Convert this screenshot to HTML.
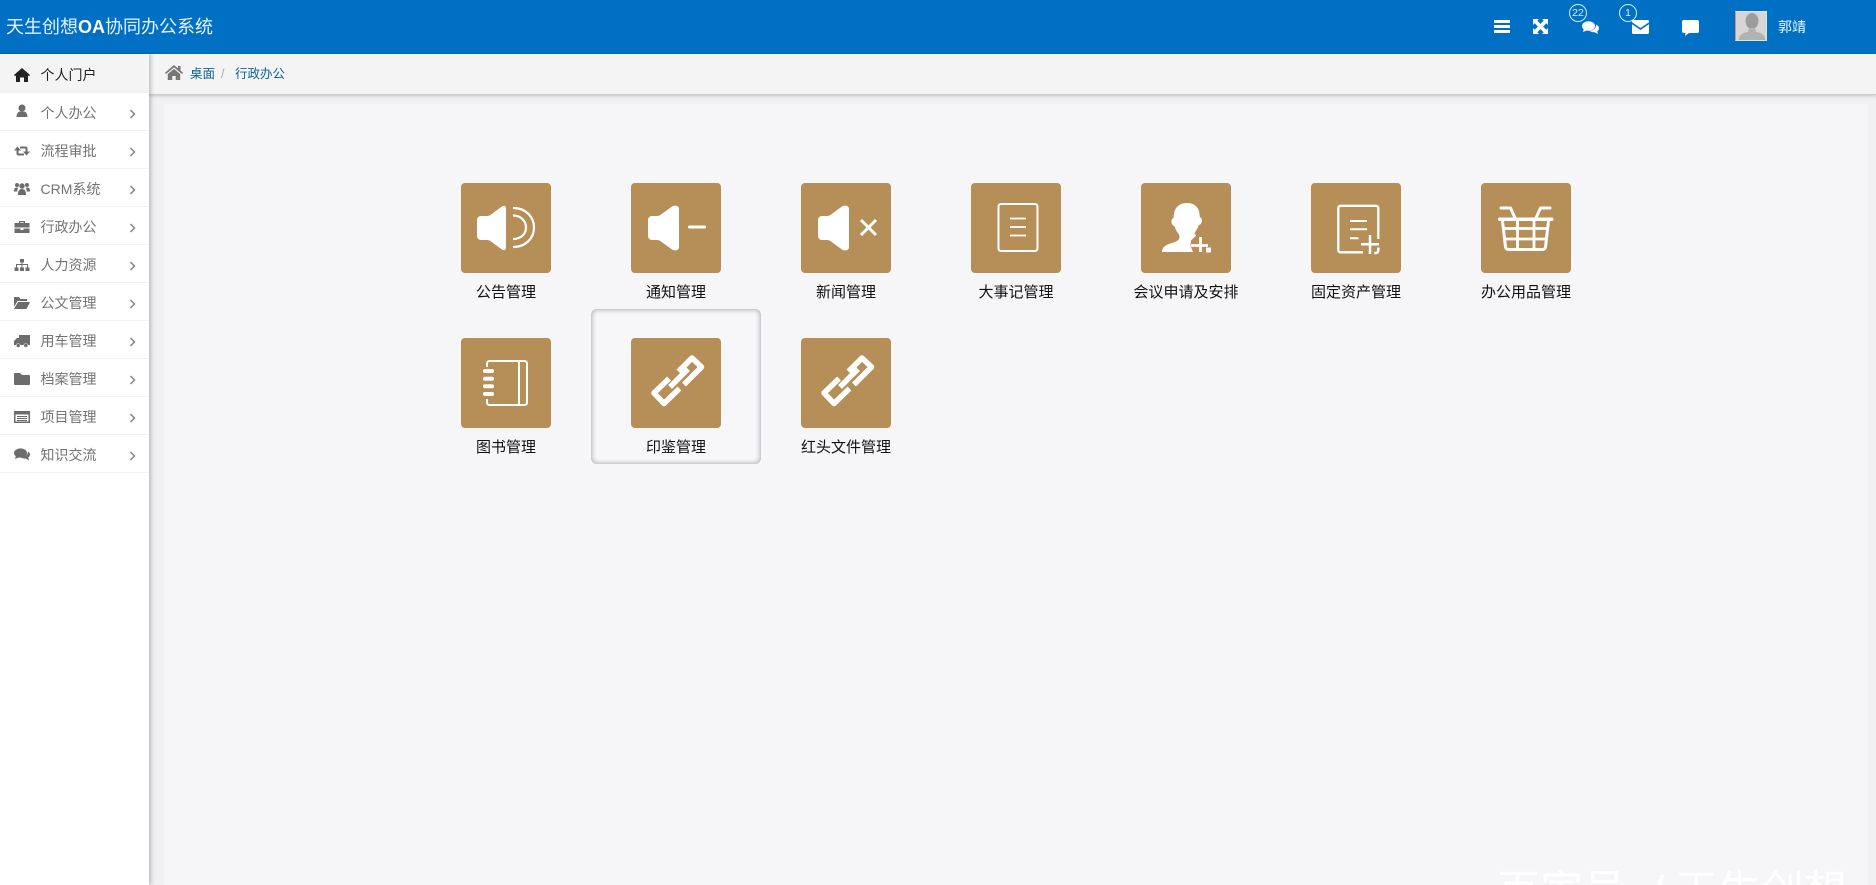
<!DOCTYPE html>
<html lang="zh"><head><meta charset="utf-8"><title>天生创想OA协同办公系统</title>
<style>
*{margin:0;padding:0;box-sizing:border-box}
html{width:1876px;height:885px;overflow:hidden}
body{position:relative;width:1876px;height:885px;overflow:hidden;background:#f0f0f2;font-family:"Liberation Sans","Noto Sans CJK SC",sans-serif}
.abs{position:absolute}
#hd{left:0;top:0;width:1876px;height:54px;background:#0070c5}
#title{left:6px;top:15px;font-size:18px;line-height:24px;color:#e6f3fb;white-space:nowrap}
#title b{font-weight:700;color:#fff}
#side{left:0;top:54px;width:149px;height:831px;background:#fff;box-shadow:2px 0 4px rgba(0,0,0,.22);z-index:3}
.row{position:absolute;left:0;width:149px;height:38px;border-bottom:1px solid #f2f2f2;color:#737373;font-size:14px}
.row span{position:absolute;left:40.500px;top:10px;line-height:20px;white-space:nowrap}
.row svg.i{position:absolute;left:14px;top:12px;width:16px;height:16px;fill:#6c6c6c}
.row svg.c{position:absolute;left:129px;top:16px;width:7px;height:10px;fill:none;stroke:#808080;stroke-width:1.4}
#bc{left:149px;top:54px;width:1727px;height:41px;background:#f4f4f4;border-bottom:1px solid #ccc;box-shadow:0 1px 3px rgba(0,0,0,.18)}
#bc div{position:absolute;top:10px;font-size:12.5px;line-height:20px;color:#0c6396;white-space:nowrap}
#main{left:164px;top:104px;width:1704px;height:781px;background:#f6f6f9}
.t{position:absolute;width:90px;height:90px;background:#b68e58;border-radius:4px}
.t svg{position:absolute;left:0;top:0;width:90px;height:90px}
.l{position:absolute;width:170px;text-align:center;font-size:15px;line-height:20px;color:#111;white-space:nowrap}
#hover{left:591px;top:309px;width:170px;height:155px;border-radius:6px;box-shadow:inset 0 0 5px 1px rgba(0,0,0,.28);background:#f7f7fa}
.badge{position:absolute;width:18px;height:18px;border:1px solid #d5ecfa;border-radius:50%;color:#d5ecfa;font-size:10.5px;line-height:16px;text-align:center}
#av{left:1735px;top:11px;width:32px;height:30px;background:#d2d2d2;border:1px solid #cfeaf9;border-left:1px solid #e08a80;overflow:hidden}
.wm{position:absolute;top:868px;font-size:43px;line-height:48px;color:#fff;white-space:nowrap}
</style></head><body>
<div class="abs" id="hd"></div>
<div class="abs" id="title">天生创想<b>OA</b>协同办公系统</div>

<svg class="abs" style="left:1494px;top:20px" width="16" height="14" fill="#fff"><rect width="16" height="3"/><rect y="5" width="16" height="3"/><rect y="10" width="16" height="3"/></svg>
<svg class="abs" style="left:1533px;top:19px" width="15" height="15" viewBox="0 0 15 15" fill="#fff"><path d="M0 0h6L4.300 1.700 7.500 4.900 10.700 1.700 9 0h6v6l-1.700-1.700L10.100 7.500l3.200 3.200L15 9v6H9l1.700-1.700-3.200-3.200-3.200 3.200L6 15H0V9l1.700 1.700 3.200-3.200-3.200-3.200L0 6z"/></svg>
<div class="badge" style="left:1569px;top:4px">22</div>
<svg class="abs" style="left:1582px;top:21px" width="17" height="13" viewBox="0 0 17 13" fill="#fff"><ellipse cx="6.500" cy="5" rx="6.500" ry="4.800"/><path d="M2 7L1 11 6 9z"/><path d="M14 3.500c2 .8 3 2.200 3 3.700 0 1.300-.8 2.400-1.800 3.100L16 13l-3.300-1.800c-2 .2-4.200-.4-5.200-1.400 3.800 0 6.800-2.600 6.500-6.300z"/></svg>
<div class="badge" style="left:1619px;top:4px">1</div>
<svg class="abs" style="left:1632px;top:20px" width="17" height="14" viewBox="0 0 17 14" fill="#fff"><path d="M1.500 0h14A1.500 1.500 0 0 1 17 1.500v.7L8.500 8 0 2.200v-.7A1.500 1.500 0 0 1 1.500 0z"/><path d="M0 4.200L8.500 10 17 4.200v8.300a1.500 1.500 0 0 1-1.500 1.500h-14A1.500 1.500 0 0 1 0 12.500z"/></svg>
<svg class="abs" style="left:1682px;top:20px" width="17" height="16" viewBox="0 0 17 16" fill="#fff"><path d="M2 0h13a2 2 0 0 1 2 2v9a2 2 0 0 1-2 2H7l-4 3 .6-3H2a2 2 0 0 1-2-2V2a2 2 0 0 1 2-2z"/></svg>
<div class="abs" id="av"><svg width="30" height="28" viewBox="0 0 30 28"><rect width="30" height="28" fill="#d6d6d6"/><ellipse cx="16" cy="9" rx="6.500" ry="8" fill="#9c9c9c"/><path d="M3 28c0-5 3-7 9-8l1-4h6l1 4c6 1 9 3 9 8z" fill="#b2b2b2"/></svg></div>
<div class="abs" style="left:1778px;top:17px;font-size:14px;line-height:20px;color:#eef7fd;white-space:nowrap">郭靖</div>

<div class="abs" id="side">
<div class="row" style="top:0;height:39px;background:#f4f4f4;color:#222"><span style="top:11px">个人门户</span><svg class="i" style="top:13px;left:14px;fill:#222" viewBox="0 0 16 16"><path d="M8 1l8 7-1 1.200-1-.8V15h-4v-4.500H6V15H2V8.400l-1 .8L0 8z"/></svg></div>
<div class="row" style="top:39px"><span>个人办公</span><svg class="i" style="top:11px" viewBox="0 0 16 16"><circle cx="8" cy="4" r="3.500"/><path d="M2.500 13c0-3 1.500-5 3-5.500h5c1.500.5 3 2.500 3 5.500z"/></svg><svg class="c" viewBox="0 0 7 10"><path d="M1.500 1l4 4-4 4"/></svg></div>
<div class="row" style="top:77px"><span>流程审批</span><svg class="i" viewBox="0 0 16 16"><path d="M0 7.500h7L3.500 3.500zM9 8.500h7l-3.500 4z"/><path d="M3.500 7v3.500a1 1 0 0 0 1 1h5.500M12.500 9V5.500a1 1 0 0 0-1-1H6" fill="none" stroke="#6c6c6c" stroke-width="2"/></svg><svg class="c" viewBox="0 0 7 10"><path d="M1.500 1l4 4-4 4"/></svg></div>
<div class="row" style="top:115px"><span>CRM系统</span><svg class="i" viewBox="0 0 16 16"><circle cx="3" cy="4" r="2"/><circle cx="13" cy="4" r="2"/><circle cx="8" cy="5" r="2.700"/><path d="M0 10c0-2.500 1-3.500 3-3.500.5 0 1 .2 1.300.4-.7.7-1 2-1 3.600H0zM16 10c0-2.500-1-3.500-3-3.500-.5 0-1 .2-1.300.4.7.7 1 2 1 3.600H16zM4 14c0-4 1-6 4-6s4 2 4 6z"/></svg><svg class="c" viewBox="0 0 7 10"><path d="M1.500 1l4 4-4 4"/></svg></div>
<div class="row" style="top:153px"><span>行政办公</span><svg class="i" viewBox="0 0 16 16"><path d="M5 2h6v2h4.500v4.500h-15V4H5zm1.300 1.200V4h3.400v-.8zM.5 9.500h6V11h3V9.500h6V14h-15z"/></svg><svg class="c" viewBox="0 0 7 10"><path d="M1.500 1l4 4-4 4"/></svg></div>
<div class="row" style="top:191px"><span>人力资源</span><svg class="i" viewBox="0 0 16 16"><path d="M6 2h4v3.500H8.500V7H14v3.500h1.500V14h-4v-3.500H13V8H8.500v2.500H10V14H6v-3.500h1.500V8H3v2.500h1.500V14h-4v-3.500H2V7h5.500V5.500H6z"/></svg><svg class="c" viewBox="0 0 7 10"><path d="M1.500 1l4 4-4 4"/></svg></div>
<div class="row" style="top:229px"><span>公文管理</span><svg class="i" viewBox="0 0 16 16"><path d="M0 2h5l1.500 2H13v2H3.500L0 12zM4 7h12l-3.500 7H0z"/></svg><svg class="c" viewBox="0 0 7 10"><path d="M1.500 1l4 4-4 4"/></svg></div>
<div class="row" style="top:267px"><span>用车管理</span><svg class="i" viewBox="0 0 16 16"><path d="M5 2h11v10h-2a2.300 2.300 0 0 0-4.400 0H6.400A2.300 2.300 0 0 0 2 12H0V8l3-3h2z"/><circle cx="4.200" cy="12.500" r="1.700"/><circle cx="11.800" cy="12.500" r="1.700"/></svg><svg class="c" viewBox="0 0 7 10"><path d="M1.500 1l4 4-4 4"/></svg></div>
<div class="row" style="top:305px"><span>档案管理</span><svg class="i" viewBox="0 0 16 16"><path d="M1 2h5l2 2h7a1 1 0 0 1 1 1v8a1 1 0 0 1-1 1H1a1 1 0 0 1-1-1V3a1 1 0 0 1 1-1z"/></svg><svg class="c" viewBox="0 0 7 10"><path d="M1.500 1l4 4-4 4"/></svg></div>
<div class="row" style="top:343px"><span>项目管理</span><svg class="i" viewBox="0 0 16 16"><path fill-rule="evenodd" d="M0 2h16v12H0zM1.500 5.500v7h13v-7zM3 7h10v1H3zm0 2h10v1H3zm0 2h10v1H3z"/></svg><svg class="c" viewBox="0 0 7 10"><path d="M1.500 1l4 4-4 4"/></svg></div>
<div class="row" style="top:381px"><span>知识交流</span><svg class="i" viewBox="0 0 16 16"><ellipse cx="6.500" cy="6" rx="6.500" ry="4.600"/><path d="M2 8.500L1 12l5-2z"/><path d="M14 4.500c1.300.7 2 1.800 2 3 0 1.300-.7 2.300-1.800 3L15 13.500l-3.200-2c-2 .3-4.100-.3-5-1.200 3.700 0 7.300-2.200 7.200-5.800z"/></svg><svg class="c" viewBox="0 0 7 10"><path d="M1.500 1l4 4-4 4"/></svg></div>
</div>

<div class="abs" id="bc">
<svg style="position:absolute;left:16px;top:11px" width="18" height="15" viewBox="0 0 18 15" fill="#777"><path d="M9 0l4 3.400V1h2.500v4.500L18 7.700 17 9 9 2.400 1 9 0 7.700z"/><path d="M2.800 9L9 3.900 15.200 9v6h-4.500v-4H7.300v4H2.800z"/></svg>
<div style="left:41px">桌面</div><div style="left:72px;color:#aaa">/</div><div style="left:86px">行政办公</div>
</div>

<div class="abs" id="main"></div>
<div class="abs" id="hover"></div>

<div class="t abs" style="left:461px;top:183px"><svg viewBox="0 0 90 90"><path d="M20 33h6c1.500 0 3-.5 4-1.500l11-8c2-1.300 4-.5 4 2v39c0 2.500-2 3.300-4 2l-11-8c-1-1-2.500-1.500-4-1.500h-6a4 4 0 0 1-4-4V37a4 4 0 0 1 4-4z" fill="#fff"/><path d="M52 25c13 0 21 9 21 19.500S65 64 52 64M52 32.500c8 0 13 5.500 13 12s-5 11.500-13 11.500" fill="none" stroke="#fff" stroke-width="2.200"/></svg></div>
<div class="l abs" style="left:421px;top:283px">公告管理</div>

<div class="t abs" style="left:631px;top:183px"><svg viewBox="0 0 90 90"><path d="M21 33h5c1.500 0 3-.5 4-1.500l11-8c3-2 7-.5 7 2v39c0 2.500-4 4-7 2l-11-8c-1-1-2.500-1.500-4-1.500h-5a4 4 0 0 1-4-4V37a4 4 0 0 1 4-4z" fill="#fff"/><rect x="57" y="42.500" width="18" height="3" rx="1.500" fill="#fff"/></svg></div>
<div class="l abs" style="left:591px;top:283px">通知管理</div>

<div class="t abs" style="left:801px;top:183px"><svg viewBox="0 0 90 90"><path d="M21 33h5c1.500 0 3-.5 4-1.500l11-8c3-2 7-.5 7 2v39c0 2.500-4 4-7 2l-11-8c-1-1-2.500-1.500-4-1.500h-5a4 4 0 0 1-4-4V37a4 4 0 0 1 4-4z" fill="#fff"/><path d="M60 37l15 15M75 37L60 52" stroke="#fff" stroke-width="3" fill="none"/></svg></div>
<div class="l abs" style="left:761px;top:283px">新闻管理</div>

<div class="t abs" style="left:971px;top:183px"><svg viewBox="0 0 90 90"><rect x="27.500" y="21" width="39" height="47" rx="2.500" fill="none" stroke="#fff" stroke-width="2"/><path d="M39 35.500h16M39 44h16M39 52.500h16" stroke="#fff" stroke-width="1.800"/></svg></div>
<div class="l abs" style="left:931px;top:283px">大事记管理</div>

<div class="t abs" style="left:1141px;top:183px"><svg viewBox="0 0 90 90"><path d="M46 20c7 0 12 4 12.500 11l.3 3c1.500.5 2.500 2 2 4.500-.4 2-1.500 3.500-3 3.500-1 3-2.500 5.500-4 7.500-.5 1 0 2 1.500 3L50 57.500l-.5 5.500 2.500 6H21c0-4 2.500-6.500 7-8 6-2 10-3 10.500-6.500.2-1.500-.3-2.500-1.300-4-1.500-1.800-2.700-4-3.700-7.500-1.500 0-2.600-1.500-3-3.500-.5-2.500.5-4 2-4.500l.3-3C33.500 24 39 20 46 20z" fill="#fff"/><path d="M50 62.500h17M59.500 54v15" stroke="#fff" stroke-width="2.800" fill="none"/><rect x="65" y="64.500" width="5" height="5" fill="#fff"/></svg></div>
<div class="l abs" style="left:1101px;top:283px">会议申请及安排</div>

<div class="t abs" style="left:1311px;top:183px"><svg viewBox="0 0 90 90"><path d="M52 69.300H29.500a2.200 2.200 0 0 1-2.200-2.200V25a2.200 2.200 0 0 1 2.200-2.200h35.600A2.200 2.200 0 0 1 67.300 25v31" fill="none" stroke="#fff" stroke-width="2.300"/><path d="M39 38h17M39 46.300h17M39 55.300h8.500" stroke="#fff" stroke-width="2"/><path d="M50 61.300h18M59 52v19M67.300 64.500v3a2.500 2.500 0 0 1-2.500 2.500h-1.500" stroke="#fff" stroke-width="2.500" fill="none"/></svg></div>
<div class="l abs" style="left:1271px;top:283px">固定资产管理</div>

<div class="t abs" style="left:1481px;top:183px"><svg viewBox="0 0 90 90"><path d="M20 25h9.500l5 11M69 25h-9.500l-5 11" stroke="#fff" stroke-width="3" fill="none" stroke-linecap="round" stroke-linejoin="round"/><rect x="17" y="34.500" width="55.500" height="3.500" rx="1.700" fill="#fff"/><path d="M21.500 38l3 26a3 3 0 0 0 3 2.500h34a3 3 0 0 0 3-2.500l3-26" fill="none" stroke="#fff" stroke-width="3"/><path d="M23 45.500h43M24 56h41M36.500 38v28M53 38v28" stroke="#fff" stroke-width="2.800"/></svg></div>
<div class="l abs" style="left:1441px;top:283px">办公用品管理</div>

<div class="t abs" style="left:461px;top:338px"><svg viewBox="0 0 90 90"><path d="M26 29v-3.500a2.500 2.500 0 0 1 2.500-2.500h35a2.500 2.500 0 0 1 2.500 2.500v39a2.500 2.500 0 0 1-2.500 2.500h-35a2.500 2.500 0 0 1-2.500-2.500V61" fill="none" stroke="#fff" stroke-width="2"/><path d="M58 23v44" stroke="#fff" stroke-width="2"/><g fill="#fff"><rect x="22" y="31" width="11" height="4" rx="2"/><rect x="22" y="38.700" width="11" height="4" rx="2"/><rect x="22" y="46.300" width="11" height="4" rx="2"/><rect x="22" y="54" width="11" height="4" rx="2"/></g></svg></div>
<div class="l abs" style="left:421px;top:438px">图书管理</div>

<div class="t abs" style="left:631px;top:338px"><svg viewBox="0 0 90 90"><path d="M47.500 33.500L61 20l9.500 9L53 46.500M38 40.500L23 55l10 10.500 15.500-15M39 49l18-18" fill="none" stroke="#fff" stroke-width="5.500" stroke-linejoin="round"/></svg></div>
<div class="l abs" style="left:591px;top:438px">印鉴管理</div>

<div class="t abs" style="left:801px;top:338px"><svg viewBox="0 0 90 90"><path d="M47.500 33.500L61 20l9.500 9L53 46.500M38 40.500L23 55l10 10.500 15.500-15M39 49l18-18" fill="none" stroke="#fff" stroke-width="5.500" stroke-linejoin="round"/></svg></div>
<div class="l abs" style="left:761px;top:438px">红头文件管理</div>

<div class="wm" style="left:1497px">百家号</div>
<div class="wm" style="left:1652px">/</div>
<div class="wm" style="left:1675px">天生创想</div>
</body></html>
